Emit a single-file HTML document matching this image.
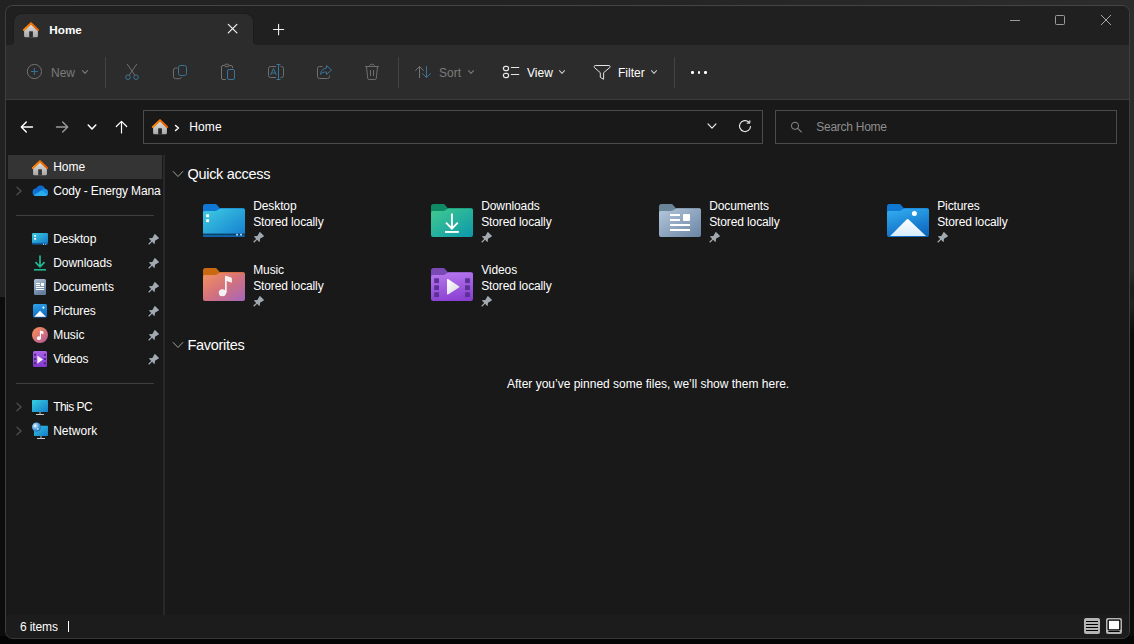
<!DOCTYPE html>
<html><head><meta charset="utf-8">
<style>
*{margin:0;padding:0;box-sizing:border-box}
html,body{width:1134px;height:644px;overflow:hidden;background:#0c0c0c;font-family:"Liberation Sans",sans-serif;font-size:12px;color:#fff}
.abs{position:absolute}
svg{overflow:visible}
#win{position:absolute;left:5px;top:5px;width:1125px;height:634px;border:1px solid;border-color:#454545 #3e3e3e #383838 #3e3e3e;border-radius:8px;background:#191919;overflow:hidden}
#inner{position:absolute;left:-6px;top:-6px;width:1134px;height:644px}
.t{position:absolute;white-space:nowrap;line-height:16px;height:16px}
.sep{position:absolute;width:1px;background:#434343}
.gray{color:#7b7b7b}
</style></head><body>
<div class="abs" style="left:0;top:0;width:1134px;height:297px;background:linear-gradient(90deg,#222 0%,#232323 50%,#2c2c2c 100%)"></div>
<div class="abs" style="left:600px;top:272px;width:534px;height:60px;background:linear-gradient(180deg,#2b2b2b 0%,#1c1c1c 30%,#222 55%,#0c0c0c 100%)"></div>
<div class="abs" style="left:0;top:636px;width:1134px;height:8px;background:#050505"></div>
<div id="win"><div id="inner">
<div class="abs" style="left:6px;top:6px;width:1123px;height:39px;background:#202020"></div>
<div class="abs" style="left:14px;top:14px;width:239px;height:31px;background:#2c2c2c;border-radius:8px 8px 0 0;box-shadow:0 0 0 1px #1c1c1c"></div>
<svg class="abs" style="left:10px;top:41px" width="4" height="4" viewBox="0 0 4 4"><path d="M4 0V4H0A4 4 0 0 0 4 0Z" fill="#2c2c2c"/></svg>
<svg class="abs" style="left:253px;top:41px" width="4" height="4" viewBox="0 0 4 4"><path d="M0 0V4H4A4 4 0 0 1 0 0Z" fill="#2c2c2c"/></svg>
<div class="abs" style="left:6px;top:45px;width:1123px;height:55px;background:#2c2c2c;border-bottom:1px solid #3c3c3c"></div>

<svg class="abs" style="left:23px;top:22px" width="16" height="16" viewBox="0 0 16 16"><defs><linearGradient id="hg1" x1="0" y1="0" x2="0" y2="1"><stop offset="0" stop-color="#e0e0e0"/><stop offset="1" stop-color="#a8a8a8"/></linearGradient><linearGradient id="hg1r" x1="0" y1="0" x2="1" y2="0"><stop offset="0" stop-color="#fb8a08"/><stop offset="1" stop-color="#e85c04"/></linearGradient></defs><path d="M1.100 8.200L8 1.800l6.900 6.400V13.900a1.300 1.300 0 0 1-1.300 1.300H2.400A1.300 1.300 0 0 1 1.100 13.900Z" fill="url(#hg1)"/><rect x="6.200" y="9.300" width="3.700" height="6" fill="#2c2c2c"/><path d="M0.900 8L8 1.200L15.100 8" fill="none" stroke="url(#hg1r)" stroke-width="2.100" stroke-linecap="round" stroke-linejoin="round"/></svg>
<div class="t" style="left:49.300px;top:22px;font-weight:bold;font-size:11.700px">Home</div>
<svg class="abs" style="left:228px;top:24px" width="9" height="9" viewBox="0 0 9 9"><path d="M0.300 0.300L8.900 8.900M8.900 0.300L0.300 8.900" stroke="#f2f2f2" stroke-width="1.200" stroke-linecap="round"/></svg>
<svg class="abs" style="left:273px;top:24px" width="11" height="11" viewBox="0 0 11 11"><path d="M0.500 5.500H10.700M5.600 0.300V10.700" stroke="#f2f2f2" stroke-width="1.100" stroke-linecap="round"/></svg>
<div class="abs" style="left:1010px;top:20px;width:10px;height:1px;background:#9c9c9c"></div>
<div class="abs" style="left:1055px;top:15px;width:10px;height:10px;border:1px solid #9c9c9c;border-radius:1.500px"></div>
<svg class="abs" style="left:1101px;top:15px" width="10" height="10" viewBox="0 0 10 10"><path d="M0 0L10 10M10 0L0 10" stroke="#a8a8a8" stroke-width="1"/></svg>
<svg class="abs" style="left:26px;top:63px" width="17" height="17" viewBox="0 0 17 17"><circle cx="8.400" cy="8.500" r="7.100" fill="none" stroke="#727272" stroke-width="1"/><path d="M5 8.500H11.800M8.400 5.100V11.900" stroke="#2f7197" stroke-width="1.100"/></svg>
<div class="t gray" style="left:51px;top:65px">New</div>
<svg class="abs" style="left:79px;top:66.2px" width="12" height="12" viewBox="-6 -6 12 12"><path d="M-2.5 -1.3L0 1.3L2.5 -1.3" fill="none" stroke="#7b7b7b" stroke-width="1.1" stroke-linecap="round" stroke-linejoin="round"/></svg>
<div class="sep" style="left:105px;top:57px;height:31px"></div>
<svg class="abs" style="left:124px;top:63px" width="16" height="18" viewBox="0 0 16 18"><path d="M3.200 1L10.800 12.300M12.800 1L5.200 12.300" stroke="#707070" stroke-width="1" fill="none"/><circle cx="4" cy="14.200" r="2.300" fill="none" stroke="#3b7496" stroke-width="1"/><circle cx="12" cy="14.200" r="2.300" fill="none" stroke="#3b7496" stroke-width="1"/></svg>
<svg class="abs" style="left:172px;top:64px" width="16" height="16" viewBox="0 0 16 16"><path d="M5.500 4H3.500A2 2 0 0 0 1.500 6V12.700A2 2 0 0 0 3.500 14.700H7.500A2 2 0 0 0 9.400 13.200" fill="none" stroke="#6e6e6e" stroke-width="1"/><rect x="6.500" y="1.500" width="8" height="10" rx="2" fill="none" stroke="#3b7496" stroke-width="1"/></svg>
<svg class="abs" style="left:220px;top:63px" width="16" height="18" viewBox="0 0 16 18"><path d="M5.800 16.500H3A1.500 1.500 0 0 1 1.500 15V4A1.500 1.500 0 0 1 3 2.500H4.700M9.100 2.500H11A1.500 1.500 0 0 1 12.500 4V5.200" fill="none" stroke="#727272" stroke-width="1"/><rect x="4.700" y="1.200" width="4.400" height="2.500" rx="1.250" fill="none" stroke="#727272" stroke-width="1"/><rect x="7.500" y="6.500" width="7" height="10" rx="1.500" fill="none" stroke="#3b7496" stroke-width="1"/></svg>
<svg class="abs" style="left:267px;top:63px" width="18" height="18" viewBox="0 0 18 18"><path d="M9 3.500H3.500A2 2 0 0 0 1.500 5.500V12.500A2 2 0 0 0 3.500 14.500H9M13.500 3.500H14.500A2 2 0 0 1 16.500 5.500V12.500A2 2 0 0 1 14.500 14.500H13.500" fill="none" stroke="#6e6e6e" stroke-width="1"/><path d="M11.500 1.500V16.500M9.500 1.500H13.500M9.500 16.500H13.500" stroke="#3b7496" stroke-width="1" fill="none"/><path d="M3.600 12L6.500 5.500L9.400 12M4.600 10H8.400" stroke="#3b7496" stroke-width="1" fill="none"/></svg>
<svg class="abs" style="left:316px;top:63px" width="17" height="18" viewBox="0 0 17 18"><path d="M6.500 3.500H3.500A2 2 0 0 0 1.500 5.500V13.500A2 2 0 0 0 3.500 15.500H11.500A2 2 0 0 0 13.500 13.500V12.500" fill="none" stroke="#6e6e6e" stroke-width="1"/><path d="M10.500 2.500L15.500 7L10.500 11.500V9C7.500 8.800 5.800 9.800 4.500 11.500C4.800 8 6.800 5.500 10.500 5Z" fill="none" stroke="#3b7496" stroke-width="1" stroke-linejoin="round"/></svg>
<svg class="abs" style="left:364px;top:63px" width="16" height="18" viewBox="0 0 16 18"><path d="M1 3.500H15M5.500 3.300C5.500 2 6.500 1.200 8 1.200C9.500 1.200 10.500 2 10.500 3.300M2.500 3.500L3.700 15.200A1.500 1.500 0 0 0 5.200 16.500H10.800A1.500 1.500 0 0 0 12.300 15.200L13.500 3.500M6.500 7V13M9.500 7V13" fill="none" stroke="#6e6e6e" stroke-width="1"/></svg>
<div class="sep" style="left:398px;top:57px;height:31px"></div>
<svg class="abs" style="left:414px;top:65px" width="18" height="14" viewBox="0 0 18 14"><path d="M5.500 13V1.500M1.300 5.700L5.500 1.500L9.700 5.700" fill="none" stroke="#747474" stroke-width="1"/><path d="M12.500 1V12.500M8.300 8.300L12.500 12.500L16.700 8.300" fill="none" stroke="#3b7496" stroke-width="1"/></svg>
<div class="t gray" style="left:439px;top:65px">Sort</div>
<svg class="abs" style="left:465px;top:66.2px" width="12" height="12" viewBox="-6 -6 12 12"><path d="M-2.5 -1.3L0 1.3L2.5 -1.3" fill="none" stroke="#7b7b7b" stroke-width="1.1" stroke-linecap="round" stroke-linejoin="round"/></svg>
<svg class="abs" style="left:502px;top:66px" width="18" height="13" viewBox="0 0 18 13"><rect x="1.400" y="0.400" width="5.200" height="4.200" rx="2" fill="none" stroke="#e4e4e4" stroke-width="1.200"/><rect x="1.400" y="7.300" width="5.200" height="4.300" rx="2" fill="none" stroke="#e4e4e4" stroke-width="1.200"/><path d="M8.900 1.450H17.200M8.900 8.500H17.200" stroke="#e4e4e4" stroke-width="1.100"/></svg>
<div class="t" style="left:527px;top:65px">View</div>
<svg class="abs" style="left:556px;top:66.2px" width="12" height="12" viewBox="-6 -6 12 12"><path d="M-2.5 -1.3L0 1.3L2.5 -1.3" fill="none" stroke="#c4c4c4" stroke-width="1.1" stroke-linecap="round" stroke-linejoin="round"/></svg>
<svg class="abs" style="left:593px;top:64px" width="18" height="17" viewBox="0 0 18 17"><path d="M2.300 1.500H15.900A1.200 1.200 0 0 1 16.750 3.550L10.600 8.700V15.300L7.300 13.300V8.700L1.450 3.550A1.200 1.200 0 0 1 2.300 1.500Z" fill="none" stroke="#e4e4e4" stroke-width="1" stroke-linejoin="round"/></svg>
<div class="t" style="left:618px;top:65px">Filter</div>
<svg class="abs" style="left:648px;top:66.2px" width="12" height="12" viewBox="-6 -6 12 12"><path d="M-2.5 -1.3L0 1.3L2.5 -1.3" fill="none" stroke="#c4c4c4" stroke-width="1.1" stroke-linecap="round" stroke-linejoin="round"/></svg>
<div class="sep" style="left:674px;top:57px;height:31px"></div>
<div class="abs" style="left:691.1px;top:71.400px;width:2.600px;height:2.600px;border-radius:50%;background:#fff"></div>
<div class="abs" style="left:697.7px;top:71.400px;width:2.600px;height:2.600px;border-radius:50%;background:#fff"></div>
<div class="abs" style="left:704.1px;top:71.400px;width:2.600px;height:2.600px;border-radius:50%;background:#fff"></div>
<svg class="abs" style="left:20px;top:120px" width="14" height="14" viewBox="0 0 14 14"><path d="M12.500 7H1.600M6.300 2L1.300 7L6.300 12" fill="none" stroke="#fff" stroke-width="1.400" stroke-linecap="round" stroke-linejoin="round"/></svg>
<svg class="abs" style="left:55px;top:120px" width="14" height="14" viewBox="0 0 14 14"><path d="M1.500 7H12.400M7.700 2L12.700 7L7.700 12" fill="none" stroke="#9a9a9a" stroke-width="1.400" stroke-linecap="round" stroke-linejoin="round"/></svg>
<svg class="abs" style="left:86.4px;top:120.8px" width="12" height="12" viewBox="-6 -6 12 12"><path d="M-3.8 -2.0L0 2.0L3.8 -2.0" fill="none" stroke="#fff" stroke-width="1.5" stroke-linecap="round" stroke-linejoin="round"/></svg>
<svg class="abs" style="left:115px;top:120px" width="14" height="14" viewBox="0 0 14 14"><path d="M6.500 13V1.500M1.300 6.500L6.500 1.300L11.700 6.500" fill="none" stroke="#fff" stroke-width="1.200" stroke-linecap="round" stroke-linejoin="round"/></svg>
<div class="abs" style="left:143px;top:110px;width:620px;height:34px;border:1px solid #4b4b4b"></div>
<div class="abs" style="left:775px;top:110px;width:342px;height:34px;border:1px solid #4b4b4b"></div>
<svg class="abs" style="left:152px;top:119px" width="16" height="16" viewBox="0 0 16 16"><defs><linearGradient id="hg2" x1="0" y1="0" x2="0" y2="1"><stop offset="0" stop-color="#e0e0e0"/><stop offset="1" stop-color="#a8a8a8"/></linearGradient><linearGradient id="hg2r" x1="0" y1="0" x2="1" y2="0"><stop offset="0" stop-color="#fb8a08"/><stop offset="1" stop-color="#e85c04"/></linearGradient></defs><path d="M1.100 8.200L8 1.800l6.900 6.400V13.900a1.300 1.300 0 0 1-1.300 1.300H2.400A1.300 1.300 0 0 1 1.100 13.900Z" fill="url(#hg2)"/><rect x="6.200" y="9.300" width="3.700" height="6" fill="#222"/><path d="M0.900 8L8 1.200L15.100 8" fill="none" stroke="url(#hg2r)" stroke-width="2.100" stroke-linecap="round" stroke-linejoin="round"/></svg>
<svg class="abs" style="left:171.1px;top:121.6px" width="12" height="12" viewBox="-6 -6 12 12"><path d="M-1.45 -2.5L1.45 0L-1.45 2.5" fill="none" stroke="#fff" stroke-width="1.5" stroke-linecap="round" stroke-linejoin="round"/></svg>
<div class="t" style="left:189.200px;top:119px;letter-spacing:0.150px">Home</div>
<svg class="abs" style="left:706.2px;top:120.2px" width="12" height="12" viewBox="-6 -6 12 12"><path d="M-4.0 -2.1L0 2.1L4.0 -2.1" fill="none" stroke="#e8e8e8" stroke-width="1.2" stroke-linecap="round" stroke-linejoin="round"/></svg>
<svg class="abs" style="left:738px;top:119px" width="14" height="14" viewBox="0 0 14 14"><path d="M12.550 7.500A5.500 5.500 0 1 1 10.800 3" fill="none" stroke="#e4e4e4" stroke-width="1.200" stroke-linecap="round"/><path d="M8.700 4.200H11.900V1.300" fill="#e4e4e4" fill-opacity=".55" stroke="#e4e4e4" stroke-width="0.900" stroke-linejoin="miter"/></svg>
<svg class="abs" style="left:789px;top:120px" width="14" height="14" viewBox="0 0 14 14"><circle cx="6" cy="5.800" r="3.600" fill="none" stroke="#8c8c8c" stroke-width="1"/><path d="M8.600 8.400L12.300 11.800" stroke="#8c8c8c" stroke-width="1.100" stroke-linecap="round"/></svg>
<div class="t" style="left:816.300px;top:119px;color:#8e8e8e;letter-spacing:-0.270px">Search Home</div>
<div class="abs" style="left:8px;top:155px;width:154px;height:24px;background:#343434"></div>
<div class="abs" style="left:163.200px;top:155px;width:2.300px;height:460px;background:#292929"></div>
<div class="abs" style="left:16px;top:215px;width:138px;height:1px;background:#3f3f3f"></div>
<div class="abs" style="left:16px;top:383px;width:138px;height:1px;background:#3f3f3f"></div>
<svg class="abs" style="left:32px;top:160px" width="16" height="16" viewBox="0 0 16 16"><defs><linearGradient id="hg3" x1="0" y1="0" x2="0" y2="1"><stop offset="0" stop-color="#e0e0e0"/><stop offset="1" stop-color="#a8a8a8"/></linearGradient><linearGradient id="hg3r" x1="0" y1="0" x2="1" y2="0"><stop offset="0" stop-color="#fb8a08"/><stop offset="1" stop-color="#e85c04"/></linearGradient></defs><path d="M1.100 8.200L8 1.800l6.900 6.400V13.900a1.300 1.300 0 0 1-1.300 1.300H2.400A1.300 1.300 0 0 1 1.100 13.900Z" fill="url(#hg3)"/><rect x="6.200" y="9.300" width="3.700" height="6" fill="#343434"/><path d="M0.900 8L8 1.200L15.100 8" fill="none" stroke="url(#hg3r)" stroke-width="2.100" stroke-linecap="round" stroke-linejoin="round"/></svg>
<div class="t" style="left:53.200px;top:159px">Home</div>
<div class="t" style="left:53.200px;top:183px;width:108px;overflow:hidden;letter-spacing:-0.150px">Cody - Energy Manag</div>
<div class="t" style="left:53.200px;top:231px;letter-spacing:-0.150px">Desktop</div>
<div class="t" style="left:53.200px;top:255px;letter-spacing:-0.060px">Downloads</div>
<div class="t" style="left:53.200px;top:279px">Documents</div>
<div class="t" style="left:53.200px;top:303px;letter-spacing:-0.100px">Pictures</div>
<div class="t" style="left:53.200px;top:327px">Music</div>
<div class="t" style="left:53.200px;top:351px;letter-spacing:-0.250px">Videos</div>
<div class="t" style="left:53.200px;top:399px;letter-spacing:-0.550px">This PC</div>
<div class="t" style="left:53.200px;top:423px">Network</div>
<svg class="abs" style="left:12.899999999999999px;top:185.1px" width="12" height="12" viewBox="-6 -6 12 12"><path d="M-2.1 -3.8L2.1 0L-2.1 3.8" fill="none" stroke="#505050" stroke-width="1.2" stroke-linecap="round" stroke-linejoin="round"/></svg>
<svg class="abs" style="left:12.899999999999999px;top:401.1px" width="12" height="12" viewBox="-6 -6 12 12"><path d="M-2.1 -3.8L2.1 0L-2.1 3.8" fill="none" stroke="#505050" stroke-width="1.2" stroke-linecap="round" stroke-linejoin="round"/></svg>
<svg class="abs" style="left:12.899999999999999px;top:425.1px" width="12" height="12" viewBox="-6 -6 12 12"><path d="M-2.1 -3.8L2.1 0L-2.1 3.8" fill="none" stroke="#505050" stroke-width="1.2" stroke-linecap="round" stroke-linejoin="round"/></svg>
<svg class="abs" style="left:151.9px;top:241.4px" width="1" height="1" viewBox="0 0 1 1"><g transform="rotate(45)" fill="#a1a9b1"><path d="M-2.500-7.100H2.500Q3.100-7.100 3-6.500L1.900-2.400L3.900 0.100Q4.100 0.500 3.600 0.500H0.650V4.700H-0.650V0.500H-3.600Q-4.100 0.500-3.900 0.100L-1.900-2.400L-3-6.500Q-3.100-7.100-2.500-7.100Z"/></g></svg>
<svg class="abs" style="left:151.9px;top:265.4px" width="1" height="1" viewBox="0 0 1 1"><g transform="rotate(45)" fill="#a1a9b1"><path d="M-2.500-7.100H2.500Q3.100-7.100 3-6.500L1.900-2.400L3.900 0.100Q4.100 0.500 3.600 0.500H0.650V4.700H-0.650V0.500H-3.600Q-4.100 0.500-3.900 0.100L-1.900-2.400L-3-6.500Q-3.100-7.100-2.500-7.100Z"/></g></svg>
<svg class="abs" style="left:151.9px;top:289.4px" width="1" height="1" viewBox="0 0 1 1"><g transform="rotate(45)" fill="#a1a9b1"><path d="M-2.500-7.100H2.500Q3.100-7.100 3-6.500L1.900-2.400L3.900 0.100Q4.100 0.500 3.600 0.500H0.650V4.700H-0.650V0.500H-3.600Q-4.100 0.500-3.900 0.100L-1.900-2.400L-3-6.500Q-3.100-7.100-2.500-7.100Z"/></g></svg>
<svg class="abs" style="left:151.9px;top:313.4px" width="1" height="1" viewBox="0 0 1 1"><g transform="rotate(45)" fill="#a1a9b1"><path d="M-2.500-7.100H2.500Q3.100-7.100 3-6.500L1.900-2.400L3.900 0.100Q4.100 0.500 3.600 0.500H0.650V4.700H-0.650V0.500H-3.600Q-4.100 0.500-3.900 0.100L-1.900-2.400L-3-6.500Q-3.100-7.100-2.500-7.100Z"/></g></svg>
<svg class="abs" style="left:151.9px;top:337.4px" width="1" height="1" viewBox="0 0 1 1"><g transform="rotate(45)" fill="#a1a9b1"><path d="M-2.500-7.100H2.500Q3.100-7.100 3-6.500L1.900-2.400L3.900 0.100Q4.100 0.500 3.600 0.500H0.650V4.700H-0.650V0.500H-3.600Q-4.100 0.500-3.900 0.100L-1.900-2.400L-3-6.500Q-3.100-7.100-2.500-7.100Z"/></g></svg>
<svg class="abs" style="left:151.9px;top:361.4px" width="1" height="1" viewBox="0 0 1 1"><g transform="rotate(45)" fill="#a1a9b1"><path d="M-2.500-7.100H2.500Q3.100-7.100 3-6.500L1.900-2.400L3.900 0.100Q4.100 0.500 3.600 0.500H0.650V4.700H-0.650V0.500H-3.600Q-4.100 0.500-3.900 0.100L-1.900-2.400L-3-6.500Q-3.100-7.100-2.500-7.100Z"/></g></svg>
<svg class="abs" style="left:32px;top:185px" width="16" height="12" viewBox="0 0 16 12"><defs><clipPath id="cc"><path d="M3.900 11.100A3.900 3.900 0 0 1 4.450 3.350A4.400 4.400 0 0 1 12.900 4.120A3.500 3.500 0 0 1 12.600 11.100Z"/></clipPath><linearGradient id="ccg" x1="0" y1="1" x2="0.600" y2="0"><stop offset="0" stop-color="#1884df"/><stop offset="0.600" stop-color="#0e6acd"/></linearGradient></defs><g clip-path="url(#cc)"><rect width="16" height="12" fill="url(#ccg)"/><path d="M8.700 5.900L13 2.500L17 5V12H8Z" fill="#1a8ee2"/><path d="M-1 12.300L8.300 5.900Q9.300 5.300 10.300 5.900L17 10.300V12.300Z" fill="#2aabee"/></g></svg>
<svg class="abs" style="left:32px;top:233px" width="16" height="12" viewBox="0 0 16 12"><defs><linearGradient id="sd" x1="0" y1="0" x2="1" y2="1"><stop offset="0" stop-color="#3bcbe2"/><stop offset="1" stop-color="#1478c6"/></linearGradient></defs><rect x="0" y="0" width="16" height="11.300" rx="1.200" fill="url(#sd)"/><rect x="0" y="9.800" width="16" height="1.500" fill="#0e5fa8"/><rect x="2.200" y="2" width="1.900" height="1.700" fill="#fff"/><rect x="2.200" y="5" width="1.900" height="1.700" fill="#fff"/><rect x="11" y="10.700" width="1" height="1" fill="#dbe9f4"/><rect x="13.200" y="10.700" width="1" height="1" fill="#dbe9f4"/></svg>
<svg class="abs" style="left:32px;top:254px" width="16" height="18" viewBox="0 0 16 18"><path d="M8 1.500V12.500M3.400 8.200L8 12.800L12.600 8.200" fill="none" stroke="#1fb995" stroke-width="1.700"/><rect x="2" y="15" width="12" height="1.600" fill="#1fb995"/></svg>
<svg class="abs" style="left:34px;top:279px" width="12" height="16" viewBox="0 0 12 16"><defs><linearGradient id="sdoc" x1="0" y1="0" x2="0.400" y2="1"><stop offset="0" stop-color="#b3c3d6"/><stop offset="1" stop-color="#64809f"/></linearGradient></defs><rect width="12" height="16" rx="1.500" fill="url(#sdoc)"/><rect x="2" y="4" width="4" height="1" fill="#fff"/><rect x="2" y="6" width="4" height="1" fill="#fff"/><rect x="2" y="8" width="8" height="1" fill="#fff"/><rect x="2" y="10" width="8" height="1" fill="#fff"/><rect x="7" y="4" width="3" height="3" fill="#fff"/></svg>
<svg class="abs" style="left:33px;top:304px" width="14" height="14" viewBox="0 0 14 14"><defs><linearGradient id="sp" x1="0" y1="0" x2="0.300" y2="1"><stop offset="0" stop-color="#30a4ea"/><stop offset="1" stop-color="#0e6ac4"/></linearGradient></defs><rect width="14" height="13.600" rx="1.500" fill="url(#sp)"/><path d="M1.200 12.800L6.600 7.300a.6.600 0 0 1 .8 0L13 12.800Z" fill="#fff"/><circle cx="10.400" cy="3.600" r="1.100" fill="#fff"/></svg>
<svg class="abs" style="left:32px;top:327px" width="16" height="16" viewBox="0 0 16 16"><defs><linearGradient id="sm" x1="0.150" y1="0.150" x2="0.850" y2="0.850"><stop offset="0" stop-color="#f38a5c"/><stop offset="1" stop-color="#bd5f93"/></linearGradient></defs><circle cx="8" cy="8" r="8" fill="url(#sm)"/><ellipse cx="6.900" cy="11.200" rx="2" ry="1.900" fill="#fff"/><path d="M7.900 11.200V3.500L11.400 4.600V7.200L9 6.400V11.200Z" fill="#fff"/></svg>
<svg class="abs" style="left:33px;top:351px" width="14" height="16" viewBox="0 0 14 16"><defs><linearGradient id="sv" x1="0" y1="0" x2="0" y2="1"><stop offset="0" stop-color="#ac62ea"/><stop offset="1" stop-color="#8238cc"/></linearGradient></defs><rect width="14" height="16" rx="1.500" fill="url(#sv)"/><rect x="1.1" y="2.8" width="2" height="2" fill="#4d2784"/><rect x="1.1" y="7" width="2" height="2" fill="#4d2784"/><rect x="1.1" y="11.2" width="2" height="2" fill="#4d2784"/><rect x="10.9" y="2.8" width="2" height="2" fill="#4d2784"/><rect x="10.9" y="7" width="2" height="2" fill="#4d2784"/><rect x="10.9" y="11.2" width="2" height="2" fill="#4d2784"/><path d="M4.300 4.400L10 8.600L4.300 12.800Z" fill="#f4f0f8"/></svg>
<svg class="abs" style="left:32px;top:400px" width="16" height="16" viewBox="0 0 16 16"><defs><linearGradient id="spc" x1="0" y1="0" x2="1" y2="1"><stop offset="0" stop-color="#35d0e4"/><stop offset="1" stop-color="#167dc8"/></linearGradient></defs><rect width="16" height="12" rx="0.600" fill="url(#spc)"/><rect x="7.500" y="12" width="1" height="2.200" fill="#b8c0c6"/><rect x="4" y="14" width="8" height="1" fill="#c6ccd2"/></svg>
<svg class="abs" style="left:32px;top:422px" width="16" height="18" viewBox="0 0 16 18"><defs><linearGradient id="snw" x1="0" y1="0" x2="1" y2="1"><stop offset="0" stop-color="#2fc2e0"/><stop offset="1" stop-color="#167dc8"/></linearGradient><radialGradient id="sgl" cx="0.350" cy="0.350" r="0.700"><stop offset="0" stop-color="#dff0fb"/><stop offset="0.450" stop-color="#6fb4e8"/><stop offset="1" stop-color="#1a66b8"/></radialGradient></defs><rect x="2" y="3.800" width="14" height="10.200" rx="0.600" fill="url(#snw)"/><rect x="8.500" y="14" width="1" height="2.200" fill="#b8c0c6"/><rect x="5" y="16" width="8" height="1" fill="#c6ccd2"/><circle cx="4.500" cy="5" r="4.500" fill="url(#sgl)"/><path d="M2 3.500C3 2.500 4.500 3 4 4.500C3.500 5.500 2 5 2 3.500ZM5 6.500C6 5.500 7.500 6.500 6.500 7.800C5.800 8.400 4.500 7.500 5 6.500Z" fill="#e8f4fc" opacity=".8"/></svg>
<svg class="abs" style="left:171.5px;top:167.8px" width="12" height="12" viewBox="-6 -6 12 12"><path d="M-4.8 -2.5L0 2.5L4.8 -2.5" fill="none" stroke="#a0a0a0" stroke-width="1" stroke-linecap="round" stroke-linejoin="round"/></svg>
<svg class="abs" style="left:171.5px;top:338.8px" width="12" height="12" viewBox="-6 -6 12 12"><path d="M-4.8 -2.5L0 2.5L4.8 -2.5" fill="none" stroke="#a0a0a0" stroke-width="1" stroke-linecap="round" stroke-linejoin="round"/></svg>
<div class="t" style="left:187.500px;top:166px;font-size:14.500px;letter-spacing:-0.300px">Quick access</div>
<div class="t" style="left:187.500px;top:337px;font-size:14.500px;letter-spacing:-0.300px">Favorites</div>
<svg class="abs" style="left:203px;top:204px" width="42" height="33" viewBox="0 0 42 33">
<defs><linearGradient id="gD" x1="0" y1="0" x2="1" y2="1"><stop offset="0" stop-color="#3fcde2"/><stop offset="1" stop-color="#137ccf"/></linearGradient></defs>
<path d="M0 2.5A2.5 2.5 0 0 1 2.5 0H12a2.5 2.5 0 0 1 1.9.8L16.6 4H40a2 2 0 0 1 2 2V30H0Z" fill="#1078d4"/>
<path d="M0 8.7A1.7 1.7 0 0 1 1.7 7H12.3c1 0 1.6-.3 2.3-.9L16 5.2c.7-.5 1.200-.7 2.100-.7H40a2 2 0 0 1 2 2V31a2 2 0 0 1-2 2H2a2 2 0 0 1-2-2Z" fill="url(#gD)"/>
<rect x="0" y="29.6" width="42" height="2" fill="#0b3f66"/><path d="M0 31.500H42V31a2 2 0 0 1-2 2H2a2 2 0 0 1-2-2Z" fill="#0f62b0"/><rect x="3.200" y="10.300" width="2.900" height="2.900" fill="#fff"/><rect x="3.200" y="15.200" width="2.900" height="2.900" fill="#fff"/><rect x="33.200" y="29.800" width="1.700" height="1.700" fill="#cfe6f5"/><rect x="37.200" y="29.800" width="1.700" height="1.700" fill="#cfe6f5"/></svg>
<div class="t" style="left:253.2px;top:198px;letter-spacing:-0.100px">Desktop</div><div class="t" style="left:253.2px;top:214px;letter-spacing:-0.120px">Stored locally</div>
<svg class="abs" style="left:256.97px;top:239.12px" width="1" height="1" viewBox="0 0 1 1"><g transform="rotate(45)" fill="#a0a8b0"><path d="M-2.500-7.100H2.500Q3.100-7.100 3-6.500L1.900-2.400L3.900 0.100Q4.100 0.500 3.600 0.500H0.650V4.700H-0.650V0.500H-3.600Q-4.100 0.500-3.900 0.100L-1.900-2.400L-3-6.500Q-3.100-7.100-2.500-7.100Z"/></g></svg>
<svg class="abs" style="left:431px;top:204px" width="42" height="33" viewBox="0 0 42 33">
<defs><linearGradient id="gDl" x1="0" y1="0" x2="1" y2="1"><stop offset="0" stop-color="#41cb8e"/><stop offset="1" stop-color="#0c98ac"/></linearGradient></defs>
<path d="M0 2.5A2.5 2.5 0 0 1 2.5 0H12a2.5 2.5 0 0 1 1.9.8L16.6 4H40a2 2 0 0 1 2 2V30H0Z" fill="#0f8a64"/>
<path d="M0 8.7A1.7 1.7 0 0 1 1.7 7H12.3c1 0 1.6-.3 2.3-.9L16 5.2c.7-.5 1.200-.7 2.100-.7H40a2 2 0 0 1 2 2V31a2 2 0 0 1-2 2H2a2 2 0 0 1-2-2Z" fill="url(#gDl)"/>
<path d="M20.900 9.500V24.500M15 18.700L20.900 24.600L26.800 18.700" stroke="#fff" stroke-width="1.900" fill="none"/><rect x="14" y="27" width="13.800" height="1.900" fill="#fff"/></svg>
<div class="t" style="left:481.2px;top:198px;letter-spacing:-0.100px">Downloads</div><div class="t" style="left:481.2px;top:214px;letter-spacing:-0.120px">Stored locally</div>
<svg class="abs" style="left:484.97px;top:239.12px" width="1" height="1" viewBox="0 0 1 1"><g transform="rotate(45)" fill="#a0a8b0"><path d="M-2.500-7.100H2.500Q3.100-7.100 3-6.500L1.900-2.400L3.900 0.100Q4.100 0.500 3.600 0.500H0.650V4.700H-0.650V0.500H-3.600Q-4.100 0.500-3.900 0.100L-1.900-2.400L-3-6.500Q-3.100-7.100-2.500-7.100Z"/></g></svg>
<svg class="abs" style="left:659px;top:204px" width="42" height="33" viewBox="0 0 42 33">
<defs><linearGradient id="gDc" x1="0" y1="0" x2="1" y2="1"><stop offset="0" stop-color="#b4c8dc"/><stop offset="1" stop-color="#6a84a4"/></linearGradient></defs>
<path d="M0 2.5A2.5 2.5 0 0 1 2.5 0H12a2.5 2.5 0 0 1 1.9.8L16.6 4H40a2 2 0 0 1 2 2V30H0Z" fill="#6b8598"/>
<path d="M0 8.7A1.7 1.7 0 0 1 1.7 7H12.3c1 0 1.6-.3 2.3-.9L16 5.2c.7-.5 1.200-.7 2.100-.7H40a2 2 0 0 1 2 2V31a2 2 0 0 1-2 2H2a2 2 0 0 1-2-2Z" fill="url(#gDc)"/>
<rect x="11" y="10" width="10" height="2" fill="#fff"/><rect x="11" y="15" width="10" height="2" fill="#fff"/><rect x="11" y="20" width="20" height="2" fill="#fff"/><rect x="11" y="25" width="20" height="2" fill="#fff"/><rect x="24" y="10" width="7" height="7" rx="1" fill="#fff"/></svg>
<div class="t" style="left:709.2px;top:198px;letter-spacing:-0.100px">Documents</div><div class="t" style="left:709.2px;top:214px;letter-spacing:-0.120px">Stored locally</div>
<svg class="abs" style="left:712.97px;top:239.12px" width="1" height="1" viewBox="0 0 1 1"><g transform="rotate(45)" fill="#a0a8b0"><path d="M-2.500-7.100H2.500Q3.100-7.100 3-6.500L1.900-2.400L3.900 0.100Q4.100 0.500 3.600 0.500H0.650V4.700H-0.650V0.500H-3.600Q-4.100 0.500-3.900 0.100L-1.900-2.400L-3-6.500Q-3.100-7.100-2.500-7.100Z"/></g></svg>
<svg class="abs" style="left:887px;top:204px" width="42" height="33" viewBox="0 0 42 33">
<defs><linearGradient id="gP" x1="0.3" y1="0" x2="0.7" y2="1"><stop offset="0" stop-color="#2fa9ee"/><stop offset="1" stop-color="#0d66be"/></linearGradient></defs>
<path d="M0 2.5A2.5 2.5 0 0 1 2.5 0H12a2.5 2.5 0 0 1 1.9.8L16.6 4H40a2 2 0 0 1 2 2V30H0Z" fill="#0f78d2"/>
<path d="M0 8.7A1.7 1.7 0 0 1 1.7 7H12.3c1 0 1.6-.3 2.3-.9L16 5.2c.7-.5 1.200-.7 2.100-.7H40a2 2 0 0 1 2 2V31a2 2 0 0 1-2 2H2a2 2 0 0 1-2-2Z" fill="url(#gP)"/>
<defs><linearGradient id="gPm" x1="0" y1="0" x2="0" y2="1"><stop offset="0" stop-color="#fff"/><stop offset="1" stop-color="#d6ebfa"/></linearGradient></defs><path d="M3.200 32L19.600 15.500a1.500 1.500 0 0 1 2 0L39 32Z" fill="url(#gPm)"/><circle cx="27.400" cy="9.500" r="2.500" fill="#fff"/></svg>
<div class="t" style="left:937.2px;top:198px;letter-spacing:-0.100px">Pictures</div><div class="t" style="left:937.2px;top:214px;letter-spacing:-0.120px">Stored locally</div>
<svg class="abs" style="left:940.97px;top:239.12px" width="1" height="1" viewBox="0 0 1 1"><g transform="rotate(45)" fill="#a0a8b0"><path d="M-2.500-7.100H2.500Q3.100-7.100 3-6.500L1.900-2.400L3.900 0.100Q4.100 0.500 3.600 0.500H0.650V4.700H-0.650V0.500H-3.600Q-4.100 0.500-3.900 0.100L-1.900-2.400L-3-6.500Q-3.100-7.100-2.500-7.100Z"/></g></svg>
<svg class="abs" style="left:203px;top:268px" width="42" height="33" viewBox="0 0 42 33">
<defs><linearGradient id="gM" x1="0" y1="0" x2="1" y2="1"><stop offset="0" stop-color="#f5945c"/><stop offset=".5" stop-color="#d4727c"/><stop offset="1" stop-color="#a566bd"/></linearGradient></defs>
<path d="M0 2.5A2.5 2.5 0 0 1 2.5 0H12a2.5 2.5 0 0 1 1.9.8L16.6 4H40a2 2 0 0 1 2 2V30H0Z" fill="#c96a12"/>
<path d="M0 8.7A1.7 1.7 0 0 1 1.7 7H12.3c1 0 1.6-.3 2.3-.9L16 5.2c.7-.5 1.200-.7 2.100-.7H40a2 2 0 0 1 2 2V31a2 2 0 0 1-2 2H2a2 2 0 0 1-2-2Z" fill="url(#gM)"/>
<ellipse cx="19.400" cy="24.700" rx="3.600" ry="3.500" fill="#f6f2f4"/><path d="M22 25V8.300c0-.4.300-.6.700-.500l5.400 1.700c.5.200.8.500.8 1v4.200l-5.200-1.600V25Z" fill="#f6f2f4"/></svg>
<div class="t" style="left:253.2px;top:262px;letter-spacing:-0.100px">Music</div><div class="t" style="left:253.2px;top:278px;letter-spacing:-0.120px">Stored locally</div>
<svg class="abs" style="left:256.97px;top:303.12px" width="1" height="1" viewBox="0 0 1 1"><g transform="rotate(45)" fill="#a0a8b0"><path d="M-2.500-7.100H2.500Q3.100-7.100 3-6.500L1.900-2.400L3.900 0.100Q4.100 0.500 3.600 0.500H0.650V4.700H-0.650V0.500H-3.600Q-4.100 0.500-3.900 0.100L-1.900-2.400L-3-6.500Q-3.100-7.100-2.500-7.100Z"/></g></svg>
<svg class="abs" style="left:431px;top:268px" width="42" height="33" viewBox="0 0 42 33">
<defs><linearGradient id="gV" x1="0.4" y1="0" x2="0.6" y2="1"><stop offset="0" stop-color="#b476ec"/><stop offset="1" stop-color="#8a3fd2"/></linearGradient></defs>
<path d="M0 2.5A2.5 2.5 0 0 1 2.5 0H12a2.5 2.5 0 0 1 1.9.8L16.6 4H40a2 2 0 0 1 2 2V30H0Z" fill="#7a49b4"/>
<path d="M0 8.7A1.7 1.7 0 0 1 1.7 7H12.3c1 0 1.6-.3 2.3-.9L16 5.2c.7-.5 1.200-.7 2.100-.7H40a2 2 0 0 1 2 2V31a2 2 0 0 1-2 2H2a2 2 0 0 1-2-2Z" fill="url(#gV)"/>
<defs><linearGradient id="gVp" x1="0" y1="0" x2="1" y2="1"><stop offset="0" stop-color="#fff"/><stop offset="1" stop-color="#d8d4de"/></linearGradient></defs><rect x="3.2" y="10.3" width="4.800" height="4.800" fill="#5b3196"/><rect x="3.2" y="17.3" width="4.800" height="4.800" fill="#5b3196"/><rect x="3.2" y="24.3" width="4.800" height="4.800" fill="#5b3196"/><rect x="34.1" y="10.3" width="4.800" height="4.800" fill="#5b3196"/><rect x="34.1" y="17.3" width="4.800" height="4.800" fill="#5b3196"/><rect x="34.1" y="24.3" width="4.800" height="4.800" fill="#5b3196"/><path transform="translate(0 1)" d="M16 10.700c0-.6.500-.9 1-.6L28 17.200c.5.300.5.900 0 1.200L17 25.400c-.5.300-1 0-1-.6Z" fill="url(#gVp)"/></svg>
<div class="t" style="left:481.2px;top:262px;letter-spacing:-0.100px">Videos</div><div class="t" style="left:481.2px;top:278px;letter-spacing:-0.120px">Stored locally</div>
<svg class="abs" style="left:484.97px;top:303.12px" width="1" height="1" viewBox="0 0 1 1"><g transform="rotate(45)" fill="#a0a8b0"><path d="M-2.500-7.100H2.500Q3.100-7.100 3-6.500L1.900-2.400L3.900 0.100Q4.100 0.500 3.600 0.500H0.650V4.700H-0.650V0.500H-3.600Q-4.100 0.500-3.900 0.100L-1.900-2.400L-3-6.500Q-3.100-7.100-2.500-7.100Z"/></g></svg>
<div class="t" style="left:507px;top:376px">After you’ve pinned some files, we’ll show them here.</div>
<div class="abs" style="left:6px;top:615px;width:1123px;height:23px;background:#1c1c1c"></div>
<div class="t" style="left:20px;top:619px;letter-spacing:-0.130px">6 items</div>
<div class="abs" style="left:67.700px;top:621px;width:1.500px;height:11px;background:#fff"></div>
<svg class="abs" style="left:1084px;top:618px" width="16" height="16" viewBox="0 0 16 16"><rect width="16" height="16" rx="2" fill="#b4b4b4"/><path d="M2 3.500H14M2 6.500H14M2 9.500H14M2 12.500H14" stroke="#000" stroke-width="1"/></svg>
<svg class="abs" style="left:1106px;top:618px" width="16" height="16" viewBox="0 0 16 16"><rect width="16" height="16" rx="2" fill="#b4b4b4"/><rect x="2.200" y="2.200" width="11.600" height="9.600" rx="0.800" fill="#fff" stroke="#000" stroke-width="1.300"/><path d="M2.300 13.500H13.700" stroke="#000" stroke-width="1"/></svg>
</div></div>
</body></html>
